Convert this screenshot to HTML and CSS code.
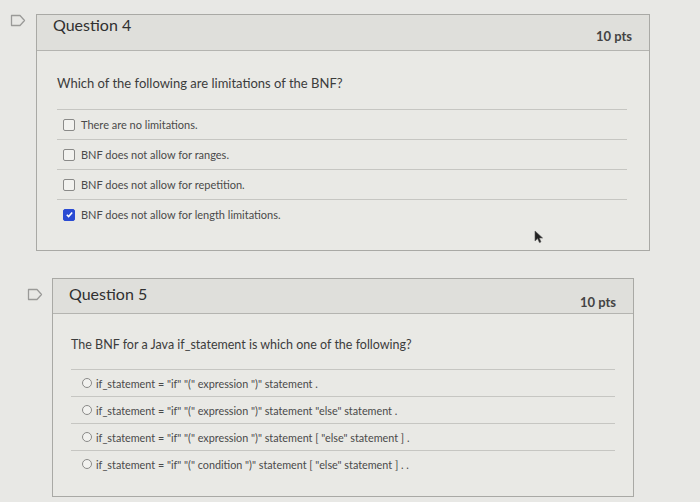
FILE: index.html
```html
<!DOCTYPE html>
<html>
<head>
<meta charset="utf-8">
<link rel="stylesheet" href="styles.css">
</head>
<body>
<div class="page">
  <div class="qrow q4">
    <svg class="flag" width="16" height="13" viewBox="0 0 16 13"><path d="M1.5 1.5 H10 L14.5 6.5 L10 11.5 H1.5 Z" fill="none" stroke="#9a9a98" stroke-width="1.3" stroke-linejoin="round"/></svg>
    <div class="card">
      <div class="head"><span class="title">Question 4</span><span class="pts">10 pts</span></div>
      <div class="body">
        <p class="qtext">Which of the following are limitations of the BNF?</p>
        <ul class="opts">
          <li><span class="box"></span>There are no limitations.</li>
          <li><span class="box"></span>BNF does not allow for ranges.</li>
          <li><span class="box"></span>BNF does not allow for repetition.</li>
          <li><span class="box checked"><svg width="9" height="9" viewBox="0 0 9 9"><path d="M1.8 4.8 L3.6 6.6 L7.2 2.4" fill="none" stroke="#fff" stroke-width="1.6"/></svg></span>BNF does not allow for length limitations.</li>
        </ul>
      </div>
    </div>
  </div>
  <div class="qrow q5">
    <svg class="flag" width="16" height="13" viewBox="0 0 16 13"><path d="M1.5 1.5 H10 L14.5 6.5 L10 11.5 H1.5 Z" fill="none" stroke="#9a9a98" stroke-width="1.3" stroke-linejoin="round"/></svg>
    <div class="card">
      <div class="head"><span class="title">Question 5</span><span class="pts">10 pts</span></div>
      <div class="body">
        <p class="qtext">The BNF for a Java if_statement is which one of the following?</p>
        <ul class="opts radios">
          <li><span class="radio"></span>if_statement = "if" "(" expression ")" statement .</li>
          <li><span class="radio"></span>if_statement = "if" "(" expression ")" statement "else" statement .</li>
          <li><span class="radio"></span>if_statement = "if" "(" expression ")" statement [ "else" statement ] .</li>
          <li><span class="radio"></span>if_statement = "if" "(" condition ")" statement [ "else" statement ] . .</li>
        </ul>
      </div>
    </div>
  </div>
  <svg class="cursor" width="10" height="14" viewBox="0 0 10 14"><path d="M1 1 L1 11 L3.6 8.6 L5.4 12.6 L7 11.9 L5.3 8 L8.6 8 Z" fill="#222" stroke="#555" stroke-width="0.6"/></svg>
</div>
</body>
</html>
```
FILE: styles.css
```css
html, body {
  margin: 0;
  padding: 0;
}
body {
  background: #e8e8e5;
  font-family: "Lato", "Liberation Sans", sans-serif;
  color: #3a3a3a;
  width: 700px;
  height: 502px;
  overflow: hidden;
}
.page {
  position: relative;
  padding-top: 14px;
}
.qrow {
  display: flex;
  align-items: flex-start;
}
.q4 {
  padding-left: 10px;
  gap: 10px;
}
.q5 {
  margin-top: 27px;
  padding-left: 27px;
  gap: 9px;
}
.flag {
  margin-top: 0;
  flex: none;
}
.q5 .flag {
  margin-top: 10px;
}
.card {
  border: 1px solid #a9a9a5;
  background: #e9e9e5;
  box-sizing: border-box;
}
.q4 .card {
  width: 614px;
  height: 237px;
}
.q5 .card {
  width: 582px;
  height: 219px;
}
.head {
  display: flex;
  justify-content: space-between;
  align-items: flex-start;
  background: #dfdfdb;
  border-bottom: 1px solid #b4b4b0;
  padding: 0 17px 0 16px;
}
.q4 .head {
  height: 35px;
}
.q5 .head {
  height: 34px;
}
.title {
  font-size: 16px;
  color: #303030;
  margin-top: 0;
}
.q5 .title {
  margin-top: 5px;
}
.pts {
  font-size: 13px;
  font-weight: 700;
  color: #444;
  margin-top: 13px;
}
.q5 .pts {
  margin-top: 15px;
}
.body {
  padding: 0 22px 0 20px;
}
.q5 .body {
  padding: 0 18px 0 18px;
}
.qtext {
  margin: 0;
  font-size: 13px;
  line-height: 16px;
  color: #3c3c3c;
}
.q4 .qtext {
  padding-top: 24px;
  padding-bottom: 18px;
}
.q5 .qtext {
  font-size: 12.5px;
  padding-top: 23px;
  padding-bottom: 16px;
}
.opts {
  list-style: none;
  margin: 0;
  padding: 0;
}
.opts li {
  display: flex;
  align-items: center;
  border-top: 1px solid #c6c6c2;
  font-size: 11px;
  color: #4a4a4a;
  height: 29px;
  padding-left: 6px;
  gap: 6px;
}
.radios li {
  height: 26px;
  font-size: 10.8px;
  padding-left: 11px;
  gap: 4px;
}
.box {
  width: 10px;
  height: 10px;
  border: 1px solid #8a8a88;
  border-radius: 2px;
  background: #f2f2ef;
  flex: none;
  display: flex;
  align-items: center;
  justify-content: center;
}
.box.checked {
  background: #2a4bd3;
  border-color: #2a4bd3;
}
.radio {
  width: 8px;
  height: 8px;
  border: 1px solid #8a8a88;
  border-radius: 50%;
  background: #f2f2ef;
  flex: none;
}
.cursor {
  position: absolute;
  left: 534px;
  top: 230px;
}
```
